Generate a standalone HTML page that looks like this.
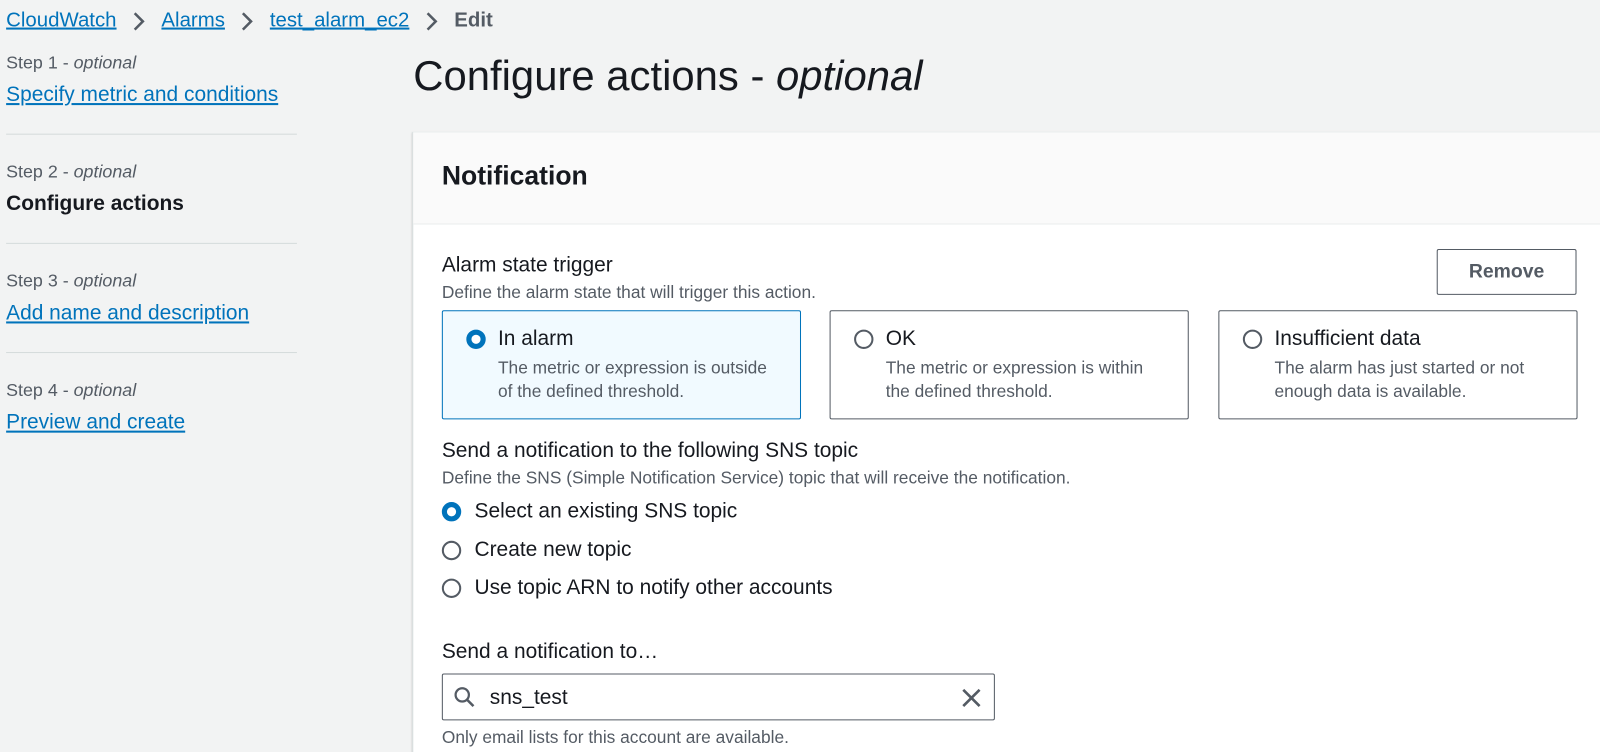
<!DOCTYPE html>
<html><head><style>
*{margin:0;padding:0;box-sizing:border-box}
html,body{width:1600px;height:752px;overflow:hidden}
body{background:#f2f3f3;font-family:"Liberation Sans",sans-serif;color:#16191f;position:relative}
#w{position:absolute;left:0;top:0;width:1568px;height:737px;overflow:hidden;transform:scale(1.0204);transform-origin:0 0}
.a{position:absolute;white-space:nowrap}
.lnk{color:#0073bb;text-decoration:underline}
.step{font-size:17.5px;color:#545b64}
.step i{font-style:italic}
.hr{position:absolute;left:6px;width:285px;height:1px;background:#d5dbdb}
.t{font-size:20.5px}
.d{font-size:17px;color:#545b64}
.card{position:absolute;top:304px;height:107px;border:1px solid #545b64;border-radius:2px;background:#fff}
.card.sel{background:#f1faff;border-color:#0073bb}
.rad{position:absolute;width:19px;height:19px;border-radius:50%;border:2px solid #545b64;background:#fff}
.rad.on{border:5.5px solid #0073bb}
.card .rad{left:23px;top:18px}
.card .ti{position:absolute;left:54px;top:15px;font-size:20.5px}
.card .de{position:absolute;left:54px;top:44px;font-size:17px;color:#545b64;line-height:23px}
.bc{display:flex;align-items:center;font-size:20px}
.bc svg{margin:0 14px}
</style></head><body><div id="w">
<div class="a bc" style="left:6px;top:9px"><span class="lnk">CloudWatch</span><svg width="16" height="22"><path d="M4 3l8 8-8 8" stroke="#545b64" stroke-width="2.5" fill="none"/></svg><span class="lnk">Alarms</span><svg width="16" height="22"><path d="M4 3l8 8-8 8" stroke="#545b64" stroke-width="2.5" fill="none"/></svg><span class="lnk">test_alarm_ec2</span><svg width="16" height="22"><path d="M4 3l8 8-8 8" stroke="#545b64" stroke-width="2.5" fill="none"/></svg><span style="color:#545b64;font-weight:bold">Edit</span></div>

<div class="a step" style="left:6px;top:51px">Step 1 - <i>optional</i></div>
<div class="a lnk" style="left:6px;top:81px;font-size:20.5px">Specify metric and conditions</div>
<div class="hr" style="top:131px"></div>
<div class="a step" style="left:6px;top:158px">Step 2 - <i>optional</i></div>
<div class="a" style="left:6px;top:188px;font-size:20.5px;font-weight:bold">Configure actions</div>
<div class="hr" style="top:238px"></div>
<div class="a step" style="left:6px;top:265px">Step 3 - <i>optional</i></div>
<div class="a lnk" style="left:6px;top:295px;font-size:20.5px">Add name and description</div>
<div class="hr" style="top:345px"></div>
<div class="a step" style="left:6px;top:372px">Step 4 - <i>optional</i></div>
<div class="a lnk" style="left:6px;top:402px;font-size:20.5px">Preview and create</div>

<div class="a" style="left:405px;top:51px;font-size:41px">Configure actions - <i>optional</i></div>

<div class="a" style="left:404px;top:129px;width:1200px;height:640px;background:#fff;border-left:1px solid #d5dbdb;border-top:1px solid #eaeded;box-shadow:0 1px 2px rgba(0,0,0,.2)"></div>
<div class="a" style="left:405px;top:130px;width:1200px;height:90px;background:#fafafa;border-bottom:1px solid #eaeded"></div>
<div class="a" style="left:433px;top:157px;font-size:26px;font-weight:bold">Notification</div>

<div class="a t" style="left:433px;top:248px">Alarm state trigger</div>
<div class="a d" style="left:433px;top:277px">Define the alarm state that will trigger this action.</div>
<div class="a" style="left:1408px;top:244px;width:137px;height:45px;border:1px solid #545b64;border-radius:2px;background:#fff;font-size:19px;font-weight:bold;color:#545b64;text-align:center;line-height:43px">Remove</div>

<div class="card sel" style="left:433px;width:352px"><div class="rad on"></div><div class="ti">In alarm</div><div class="de">The metric or expression is outside<br>of the defined threshold.</div></div>
<div class="card" style="left:813px;width:352px"><div class="rad"></div><div class="ti">OK</div><div class="de">The metric or expression is within<br>the defined threshold.</div></div>
<div class="card" style="left:1194px;width:352px"><div class="rad"></div><div class="ti">Insufficient data</div><div class="de">The alarm has just started or not<br>enough data is available.</div></div>

<div class="a t" style="left:433px;top:430px">Send a notification to the following SNS topic</div>
<div class="a d" style="left:433px;top:459px">Define the SNS (Simple Notification Service) topic that will receive the notification.</div>
<div class="rad on" style="left:433px;top:492px"></div><div class="a t" style="left:465px;top:489px">Select an existing SNS topic</div>
<div class="rad" style="left:433px;top:530px"></div><div class="a t" style="left:465px;top:527px">Create new topic</div>
<div class="rad" style="left:433px;top:567px"></div><div class="a t" style="left:465px;top:564px">Use topic ARN to notify other accounts</div>

<div class="a t" style="left:433px;top:627px">Send a notification to…</div>
<div class="a" style="left:433px;top:660px;width:542px;height:46px;border:1px solid #545b64;border-radius:2px;background:#fff"></div>
<svg class="a" style="left:444px;top:672px" width="24" height="24"><circle cx="9" cy="9" r="6.5" stroke="#545b64" stroke-width="2.2" fill="none"/><path d="M14 14l6 6" stroke="#545b64" stroke-width="2.5"/></svg>
<div class="a t" style="left:480px;top:672px">sns_test</div>
<svg class="a" style="left:940px;top:672px" width="24" height="24"><path d="M4 4l16 16M20 4L4 20" stroke="#545b64" stroke-width="2.6"/></svg>
<div class="a d" style="left:433px;top:713px">Only email lists for this account are available.</div>
</div></body></html>
